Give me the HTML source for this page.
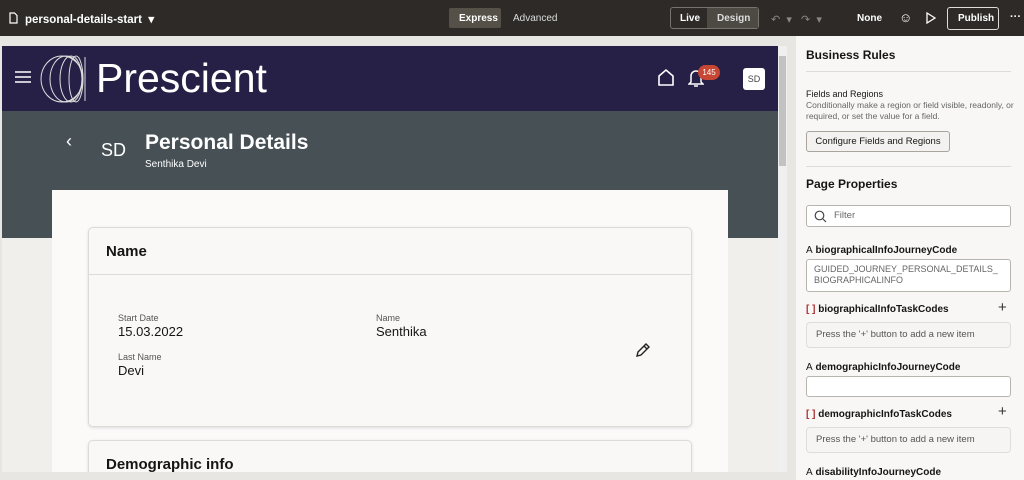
<!DOCTYPE html>
<html><head><meta charset="utf-8"><style>
*{box-sizing:border-box;margin:0;padding:0}
html,body{width:1024px;height:480px;overflow:hidden}
body{background:#e8e6e2;font-family:"Liberation Sans",sans-serif;position:relative}
.a{position:absolute}
.top{left:0;top:0;width:1024px;height:36px;background:#2d2a27;color:#fff;font-size:11px}
.top span{position:absolute;top:13px}
.cv{left:2px;top:46px;width:785px;height:426px;overflow:hidden;background:#f1efec}
.hdr{left:0;top:0;width:776px;height:65px;background:#261f46}
.slate{left:0;top:65px;width:776px;height:127px;background:#465055}
.panel{left:50px;top:144px;width:676px;height:300px;background:#fbfaf9}
.card{background:#f9f8f6;border:1px solid #dedbd7;border-radius:5px;box-shadow:0 1px 3px rgba(0,0,0,.12)}
.sb{left:776px;top:0;width:9px;height:426px;background:#f0f0f0}
.rp{left:796px;top:36px;width:228px;height:444px;background:#f8f7f5;color:#161513}
.lbl{font-size:10px;font-weight:bold;color:#161513;position:absolute;left:10px}
.box{position:absolute;left:10px;width:205px;border:1px solid #b8b4ae;border-radius:3px;background:#fff}
.ph{position:absolute;left:10px;width:205px;height:26px;border:1px solid #e0ddd9;border-radius:4px;background:#f6f5f3;font-size:9.5px;color:#555;padding:6px 9px}
</style></head><body>
<div class="a top">
 <svg class="a" style="left:9px;top:12px" width="9" height="12"><path d="M1 1h4.5l2.5 2.5V11H1z" fill="none" stroke="#fff" stroke-width="1.2"/></svg>
 <span style="left:25px;font-weight:bold;font-size:11.5px;top:12px">personal-details-start &nbsp;▾</span>
 <div class="a" style="left:449px;top:8px;width:52px;height:20px;background:#555149;border-radius:2px"></div>
 <span style="left:459px;font-weight:bold;font-size:10px">Express</span>
 <span style="left:513px;font-size:10px;color:#ddd">Advanced</span>
 <div class="a" style="left:670px;top:7px;width:89px;height:22px;border:1px solid #77736d;border-radius:3px"></div>
 <div class="a" style="left:707px;top:8px;width:51px;height:20px;background:#4d4943"></div>
 <span style="left:680px;font-weight:bold;font-size:10px">Live</span>
 <span style="left:717px;font-weight:bold;font-size:10px;color:#ddd">Design</span>
 <span style="left:771px;color:#888">↶ &nbsp;▾ &nbsp;&nbsp;↷ &nbsp;▾</span>
 <span style="left:857px;font-weight:bold;font-size:10px">None</span>
 <span style="left:899px;top:10px;font-size:13px">☺</span>
 <svg class="a" style="left:926px;top:12px" width="10" height="12"><path d="M1 1l8 5-8 5z" fill="none" stroke="#fff" stroke-width="1.3"/></svg>
 <div class="a" style="left:947px;top:7px;width:52px;height:23px;border:1px solid #ddd;border-radius:3px"></div>
 <span style="left:958px;font-weight:bold;font-size:10px">Publish</span>
 <span style="left:1010px;font-weight:bold;top:11px">···</span>
</div>
<div class="a cv">
<div class="a hdr">
 <svg class="a" style="left:13px;top:25px" width="16" height="12"><path d="M0 1h16M0 6h16M0 11h16" stroke="#fff" stroke-width="1.6"/></svg>
 <svg class="a" style="left:36px;top:8px" width="52" height="50" fill="none" stroke="#ddd" stroke-width="1"><ellipse cx="24" cy="25" rx="21" ry="23"/><ellipse cx="28" cy="25" rx="16" ry="23"/><ellipse cx="33" cy="25" rx="11" ry="23"/><ellipse cx="38" cy="25" rx="7" ry="23"/><path d="M47 3v44"/></svg>
 <div class="a" style="left:94px;top:8px;color:#fff;font-size:41px;line-height:48px">Prescient</div>
 <svg class="a" style="left:655px;top:22px" width="18" height="18"><path d="M2 17V8l7-6 7 6v9z" fill="none" stroke="#fff" stroke-width="1.6"/></svg>
 <svg class="a" style="left:686px;top:22px" width="16" height="20"><path d="M3 14V8a5 5 0 0 1 10 0v6l2 2H1zM6 18h4" fill="none" stroke="#fff" stroke-width="1.5"/></svg>
 <div class="a" style="left:696px;top:19px;width:22px;height:15px;border-radius:8px;background:#c74634;color:#fff;font-size:8px;text-align:center;line-height:15px">145</div>
 <div class="a" style="left:741px;top:22px;width:22px;height:22px;background:#fff;border-radius:3px;font-size:9px;color:#444;text-align:center;line-height:22px">SD</div>
</div>
<div class="a slate">
 <div class="a" style="left:64px;top:20px;color:#fff;font-size:18px">‹</div>
 <div class="a" style="left:99px;top:29px;color:#fff;font-size:18px">SD</div>
 <div class="a" style="left:143px;top:20px;color:#fff;font-size:21px;font-weight:bold">Personal Details</div>
 <div class="a" style="left:143px;top:48px;color:#fff;font-size:10px">Senthika Devi</div>
</div>
<div class="a panel"></div>
<div class="a card" style="left:86px;top:181px;width:604px;height:200px">
 <div class="a" style="left:17px;top:15px;font-size:15px;font-weight:bold;color:#161513">Name</div>
 <div class="a" style="left:0;top:46px;width:602px;height:1px;background:#dedbd7"></div>
 <div class="a" style="left:29px;top:85px;font-size:9px;color:#555">Start Date</div>
 <div class="a" style="left:29px;top:96px;font-size:13px;color:#161513">15.03.2022</div>
 <div class="a" style="left:287px;top:85px;font-size:9px;color:#555">Name</div>
 <div class="a" style="left:287px;top:96px;font-size:13px;color:#161513">Senthika</div>
 <div class="a" style="left:29px;top:124px;font-size:9px;color:#555">Last Name</div>
 <div class="a" style="left:29px;top:135px;font-size:13px;color:#161513">Devi</div>
 <svg class="a" style="left:546px;top:114px" width="16" height="16"><path d="M2 14l1-4 8-8 3 3-8 8zM9 4l3 3" fill="none" stroke="#222" stroke-width="1.4"/></svg>
</div>
<div class="a card" style="left:86px;top:394px;width:604px;height:60px">
 <div class="a" style="left:17px;top:15px;font-size:15px;font-weight:bold;color:#161513">Demographic info</div>
</div>
<div class="a sb"><div class="a" style="left:1px;top:10px;width:7px;height:110px;background:#c2c2c2"></div></div>
</div>
<div class="a rp">
 <div class="a" style="left:10px;top:12px;font-size:12px;font-weight:bold">Business Rules</div>
 <div class="a" style="left:10px;top:35px;width:205px;height:1px;background:#e0ddd9"></div>
 <div class="a" style="left:10px;top:53px;font-size:9px">Fields and Regions</div>
 <div class="a" style="left:10px;top:64px;font-size:8.5px;color:#666;line-height:11px;width:210px">Conditionally make a region or field visible, readonly, or required, or set the value for a field.</div>
 <div class="a" style="left:10px;top:95px;width:144px;height:21px;border:1px solid #aaa49d;border-radius:3px;background:#f3f2f0;font-size:9.5px;text-align:center;line-height:19px">Configure Fields and Regions</div>
 <div class="a" style="left:10px;top:130px;width:205px;height:1px;background:#e0ddd9"></div>
 <div class="a" style="left:10px;top:141px;font-size:12px;font-weight:bold">Page Properties</div>
 <div class="box" style="top:169px;height:22px"><svg class="a" style="left:7px;top:4px" width="13" height="13"><circle cx="5.5" cy="5.5" r="4.3" fill="none" stroke="#444" stroke-width="1.2"/><path d="M9 9l3 3" stroke="#444" stroke-width="1.2"/></svg><span class="a" style="left:27px;top:4px;font-size:9.5px;color:#666">Filter</span></div>
 <div class="lbl" style="top:209px"><span style="font-weight:normal">A</span> biographicalInfoJourneyCode</div>
 <div class="box" style="top:223px;height:33px;font-size:9px;color:#666;padding:4px 7px;line-height:11px;word-break:break-all">GUIDED_JOURNEY_PERSONAL_DETAILS_BIOGRAPHICALINFO</div>
 <div class="lbl" style="top:268px"><span style="color:#a33">[ ]</span> biographicalInfoTaskCodes</div>
 <div class="a" style="left:202px;top:263px;font-size:15px;color:#333">+</div>
 <div class="ph" style="top:286px">Press the '+' button to add a new item</div>
 <div class="lbl" style="top:326px"><span style="font-weight:normal">A</span> demographicInfoJourneyCode</div>
 <div class="box" style="top:340px;height:21px"></div>
 <div class="lbl" style="top:373px"><span style="color:#a33">[ ]</span> demographicInfoTaskCodes</div>
 <div class="a" style="left:202px;top:367px;font-size:15px;color:#333">+</div>
 <div class="ph" style="top:391px">Press the '+' button to add a new item</div>
 <div class="lbl" style="top:431px"><span style="font-weight:normal">A</span> disabilityInfoJourneyCode</div>
</div>
</body></html>
